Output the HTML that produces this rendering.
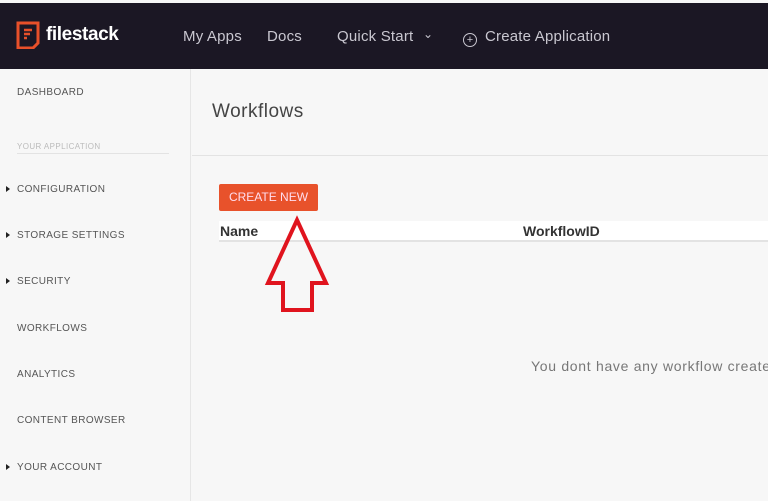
<!DOCTYPE html>
<html><head><meta charset="utf-8"><style>
*{margin:0;padding:0;box-sizing:border-box}
body{width:768px;height:501px;overflow:hidden;background:#f7f7f7;font-family:"Liberation Sans",sans-serif;position:relative}
.top{position:absolute;left:0;top:3px;width:768px;height:66px;background:#1b1724}
.nav{position:absolute;top:28px;color:#c9c7d0;font-size:15px;letter-spacing:.2px}
.side{position:absolute;left:0;top:69px;width:191px;height:432px;background:#f7f7f7;border-right:1px solid #e6e6e6}
.si{position:absolute;left:17px;font-size:10px;color:#555;letter-spacing:.4px}
.tri{position:absolute;left:6px;width:0;height:0;border-left:4px solid #222;border-top:3.5px solid transparent;border-bottom:3.5px solid transparent}
</style></head><body>
<div class="top">
<svg style="position:absolute;left:16px;top:18px" width="24" height="28" viewBox="0 0 24 28"><path d="M2 2h20v20l-5 5H2z" fill="none" stroke="#e8502a" stroke-width="3"/><path d="M8 9h8M8 13h6M8 17h3" stroke="#e8502a" stroke-width="2.5"/></svg>
<div style="position:absolute;left:46px;top:21px;color:#fff;font-size:19px;font-weight:bold;letter-spacing:-.4px">filestack</div>
<div class="nav" style="left:183px;top:25px">My Apps</div>
<div class="nav" style="left:267px;top:25px">Docs</div>
<div class="nav" style="left:337px;top:25px">Quick Start</div>
<div class="nav" style="left:423px;top:24px;font-size:12px">&#8964;</div>
<div class="nav" style="left:463px;top:25px"><span style="display:inline-block;width:14px;height:14px;border:1px solid #c9c7d0;border-radius:50%;font-size:11px;text-align:center;line-height:12px;vertical-align:-2px;margin-right:8px">+</span>Create Application</div>
</div>
<div class="side">
<div class="si" style="top:18px">DASHBOARD</div>
<div class="si" style="top:73px;font-size:8px;color:#bbb">YOUR APPLICATION</div>
<div style="position:absolute;left:17px;top:84px;width:152px;height:1px;background:#e3e3e3"></div>
<div class="tri" style="top:117px"></div><div class="si" style="top:115px">CONFIGURATION</div>
<div class="tri" style="top:163px"></div><div class="si" style="top:161px">STORAGE SETTINGS</div>
<div class="tri" style="top:209px"></div><div class="si" style="top:207px">SECURITY</div>
<div class="si" style="top:254px">WORKFLOWS</div>
<div class="si" style="top:300px">ANALYTICS</div>
<div class="si" style="top:346px">CONTENT BROWSER</div>
<div class="tri" style="top:395px"></div><div class="si" style="top:393px">YOUR ACCOUNT</div>
</div>
<div style="position:absolute;left:212px;top:101px;font-size:19px;color:#444;letter-spacing:.5px">Workflows</div>
<div style="position:absolute;left:192px;top:155px;width:576px;height:1px;background:#e3e3e3"></div>
<div style="position:absolute;left:219px;top:184px;width:99px;height:27px;background:#e8522b;border-radius:2px;color:#fde;font-size:12px;text-align:center;line-height:27px">CREATE NEW</div>
<div style="position:absolute;left:219px;top:221px;width:549px;height:21px;background:#fff;border-bottom:2px solid #e3e3e3"></div>
<div style="position:absolute;left:220px;top:223px;font-size:14px;font-weight:bold;color:#333">Name</div>
<div style="position:absolute;left:523px;top:223px;font-size:14px;font-weight:bold;color:#333">WorkflowID</div>
<svg style="position:absolute;left:0;top:0" width="768" height="501"><path d="M297 220L326 283H312V310H283V283H268Z" fill="none" stroke="#e0141e" stroke-width="4" stroke-linejoin="miter"/></svg>
<div style="position:absolute;left:531px;top:358px;font-size:14px;color:#777;white-space:nowrap;letter-spacing:.7px">You dont have any workflow created</div>
</body></html>
